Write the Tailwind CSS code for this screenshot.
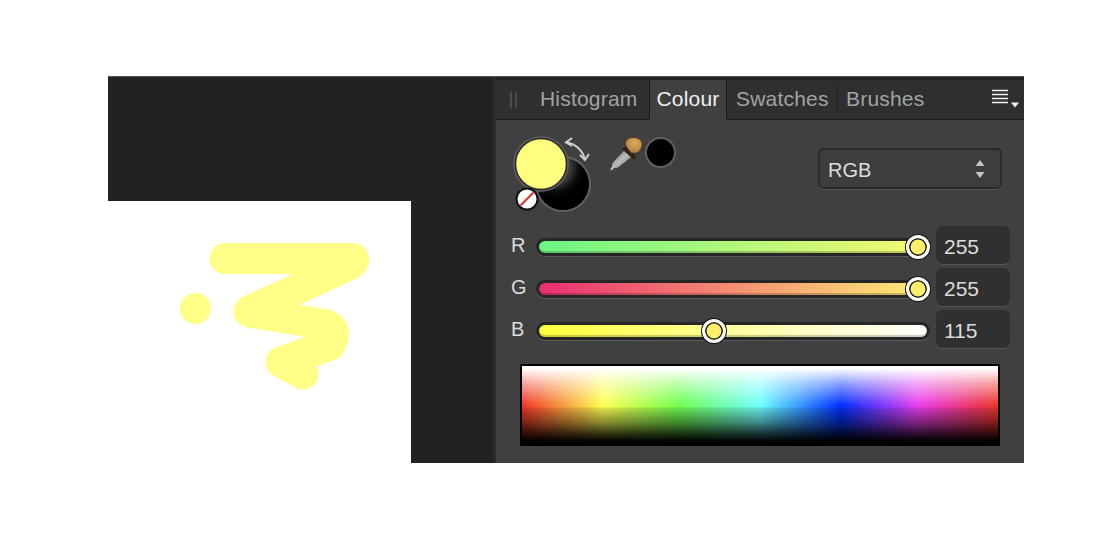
<!DOCTYPE html>
<html lang="en">

<head>
    <meta charset="UTF-8">
    <title>Colour panel</title>
    <script src="https://cdn.jsdelivr.net/npm/@tailwindcss/browser@4"></script>
</head>

<body class="bg-white font-['Liberation_Sans',sans-serif] overflow-hidden">
    <div class="pt-[76px] pl-[108px] h-[540px]">
        <div class="flex w-[916px] h-[387px] bg-[#222222] border-t border-[#555555]">

            <!-- document canvas -->
            <div class="w-[385px] pt-[124px] flex flex-col shrink-0">
                <div class="w-[303px] flex-1 bg-white">
                    <svg width="303" height="262" viewBox="108 201 303 262" fill="none">
                        <circle cx="195.5" cy="308.5" r="15.5" fill="#ffff88" />
                        <path d="M225 258.500 H353 Q356 262 345 267 L249 311 Q248 312 255 313 L327 325 Q338 330 330 345 L281 362 L303 374" stroke="#ffff88" stroke-width="31" stroke-linecap="round" stroke-linejoin="round" />
                    </svg>
                </div>
            </div>

            <!-- panel -->
            <div class="flex-1 flex flex-col pt-[3px] bg-[#222222] border-l-[3px] border-[#2c2c2c]">
                <!-- tabs -->
                <div class="h-[40px] flex items-stretch bg-[#2f2f2f] border-b border-[#1c1c1c] text-[21px] tracking-[0.2px] text-[#a3a3a3] shrink-0">
                    <div class="w-[44px] flex items-center pl-[14px] gap-[3px]">
                        <span class="w-[2px] h-[16px] bg-[#4c4c4c]"></span>
                        <span class="w-[2px] h-[16px] bg-[#4c4c4c]"></span>
                    </div>
                    <div class="w-[110px] pb-[2px] flex items-center border-r border-[#1c1c1c]">Histogram</div>
                    <div class="w-[77px] pb-[2px] -mb-px flex items-center justify-center bg-[#404040] text-[#f0f0f0] border-r border-[#1c1c1c]">Colour</div>
                    <div class="w-[110px] pb-[2px] pl-[9px] flex items-center">Swatches</div>
                    <div class="w-px my-[6px] bg-[#1e1e1e]"></div>
                    <div class="pl-[8px] pb-[2px] flex items-center">Brushes</div>
                    <div class="ml-auto mr-[4px] mt-[9px]">
                        <svg width="29" height="22" viewBox="0 0 29 22">
                            <path d="M1 1.500H17M1 5.500H17M1 9.500H17M1 13.500H17" stroke="#f2f2f2" stroke-width="1.700" />
                            <path d="M20 13.500H28L24 18.500Z" fill="#f2f2f2" />
                        </svg>
                    </div>
                </div>

                <!-- body -->
                <div class="flex-1 bg-[#404040] text-[#dcdcdc]">
                    <div class="h-[106px] flex items-start pl-[12px] pr-[22px]">
                        <svg class="mt-[14px]" width="84" height="80" viewBox="0 0 84 80" fill="none">
                            <defs>
                                <radialGradient id="backFill" cx="0.35" cy="0.2" r="0.8">
                                    <stop offset="0.35" stop-color="#3c3c3c" />
                                    <stop offset="0.55" stop-color="#0c0c0c" />
                                    <stop offset="0.7" stop-color="#000000" />
                                </radialGradient>
                            </defs>
                            <circle cx="55" cy="50" r="27" fill="url(#backFill)" stroke="#626262" stroke-width="2" />
                            <circle cx="33" cy="30" r="28" fill="#5a5a5a" />
                            <circle cx="33" cy="30" r="25.500" fill="#ffff80" stroke="#2b2b2b" stroke-width="1.500" />
                            <circle cx="19" cy="65" r="10.500" fill="#ffffff" stroke="#111111" stroke-width="2" />
                            <path d="M12.500 71.500 L25.500 58.500" stroke="#e8342c" stroke-width="2.200" />
                            <path d="M58 8.500 C66 9 74 15 77 25" stroke="#cfcfcf" stroke-width="2" />
                            <path d="M64 4 L58 8.500 L64 12 M72 21 L77 26 L81 20" stroke="#cfcfcf" stroke-width="2" />
                        </svg>
                        <svg class="ml-[17px] mt-[16px]" width="34" height="36" viewBox="0 0 34 36" fill="none">
                            <defs>
                                <linearGradient id="glass" x1="0" y1="0" x2="1" y2="1">
                                    <stop offset="0" stop-color="#4c4c4c" />
                                    <stop offset="0.5" stop-color="#bcbcbc" />
                                    <stop offset="1" stop-color="#6a6a6a" />
                                </linearGradient>
                                <radialGradient id="bulb" cx="0.55" cy="0.35" r="0.7">
                                    <stop offset="0" stop-color="#dcaa60" />
                                    <stop offset="1" stop-color="#aa7a3a" />
                                </radialGradient>
                            </defs>
                            <path d="M2 33 L3 27 L15 14 L23 21 L9 32 Z" fill="url(#glass)" stroke="#2e2e2e" stroke-width="0.800" />
                            <path d="M1 34.500 L2.500 31 L5 33 Z" fill="#c8c8c8" />
                            <path d="M13 13 L25 24 L27 20 L17 10 Z" fill="#2e2418" />
                            <path d="M17 10 C15 5 19 1.500 24 1.500 C30 1.500 34 5 33 10 C32 15 28 18 24 17 L22 17 Z" fill="url(#bulb)" stroke="#3a2a14" stroke-width="0.600" />
                        </svg>
                        <div class="ml-[2px] mt-[17px] w-[31px] h-[31px] rounded-full bg-black border-2 border-[#606060]"></div>
                        <div class="ml-auto mt-[28px] w-[184px] h-[41px] flex items-center justify-between pl-[8px] pr-[14px] rounded-[5px] bg-[#3d3d3d] border-2 border-[#2b2b2b] shadow-[0_1px_0_#555555] text-[20px]">
                            <span class="pt-[2px]">RGB</span>
                            <svg width="12" height="20" viewBox="0 0 12 20">
                                <path d="M6 1L10.500 7H1.500Z M1.500 13H10.500L6 19Z" fill="#c4c4c4" />
                            </svg>
                        </div>
                    </div>

                    <div class="flex flex-col gap-[4px] pl-[15px] pr-[14px]">
                        <div class="h-[38px] flex items-center">
                            <span class="w-[25px] text-[20px]">R</span>
                            <div class="w-[394px] h-[18px] mt-[4px] rounded-full p-[3px] bg-[#262626] shadow-[0_1px_0_#5c5c5c]">
                                <div class="h-full rounded-full flex items-center justify-end bg-[linear-gradient(to_right,#6cf585,#f8f870)] shadow-[inset_0_-2px_0_rgba(0,0,0,0.2)]">
                                    <span class="w-[24px] h-[24px] -mr-[3px] rounded-full bg-[#ffee6a] border-[3px] border-white shadow-[inset_0_0_0_1.500px_#111111,0_0_0_1px_#111111] shrink-0"></span>
                                </div>
                            </div>
                            <div class="ml-[6px] w-[74px] h-[38px] pl-[8px] pt-[3px] flex items-center rounded-[6px] bg-[#303030] shadow-[0_1px_0_#565656] text-[21px]">255</div>
                        </div>
                        <div class="h-[38px] flex items-center">
                            <span class="w-[25px] text-[20px]">G</span>
                            <div class="w-[394px] h-[18px] mt-[4px] rounded-full p-[3px] bg-[#262626] shadow-[0_1px_0_#5c5c5c]">
                                <div class="h-full rounded-full flex items-center justify-end bg-[linear-gradient(to_right,#ea2f70,#ffee75)] shadow-[inset_0_-2px_0_rgba(0,0,0,0.2)]">
                                    <span class="w-[24px] h-[24px] -mr-[3px] rounded-full bg-[#ffee6a] border-[3px] border-white shadow-[inset_0_0_0_1.500px_#111111,0_0_0_1px_#111111] shrink-0"></span>
                                </div>
                            </div>
                            <div class="ml-[6px] w-[74px] h-[38px] pl-[8px] pt-[3px] flex items-center rounded-[6px] bg-[#303030] shadow-[0_1px_0_#565656] text-[21px]">255</div>
                        </div>
                        <div class="h-[38px] flex items-center">
                            <span class="w-[25px] text-[20px]">B</span>
                            <div class="w-[394px] h-[18px] mt-[4px] rounded-full p-[3px] bg-[#262626] shadow-[0_1px_0_#5c5c5c]">
                                <div class="h-full rounded-full flex items-center pl-[163px] bg-[linear-gradient(to_right,#ffff3c,#ffffff)] shadow-[inset_0_-2px_0_rgba(0,0,0,0.2)]">
                                    <span class="w-[24px] h-[24px] rounded-full bg-[#ffee6a] border-[3px] border-white shadow-[inset_0_0_0_1.500px_#111111,0_0_0_1px_#111111] shrink-0"></span>
                                </div>
                            </div>
                            <div class="ml-[6px] w-[74px] h-[38px] pl-[8px] pt-[3px] flex items-center rounded-[6px] bg-[#303030] shadow-[0_1px_0_#565656] text-[21px]">115</div>
                        </div>
                    </div>

                    <!-- spectrum -->
                    <div class="mt-[16px] ml-[24px] w-[480px] h-[82px] border-2 border-black bg-[linear-gradient(to_right,#f03428,#f7a040_9%,#ffff55_17%,#70ff50_33%,#70ffff_50%,#0030ff_67%,#e840f0_83%,#f03428)]">
                        <div class="h-full bg-[linear-gradient(to_bottom,#ffffff_3%,rgba(255,255,255,0.55)_22%,rgba(255,255,255,0)_50%,rgba(0,0,0,0)_52%,rgba(0,0,0,0.12)_54%,rgba(0,0,0,0.45)_72%,rgba(0,0,0,0.8)_87%,#000000_97%)]"></div>
                    </div>
                </div>
            </div>
        </div>
    </div>
</body>

</html>
